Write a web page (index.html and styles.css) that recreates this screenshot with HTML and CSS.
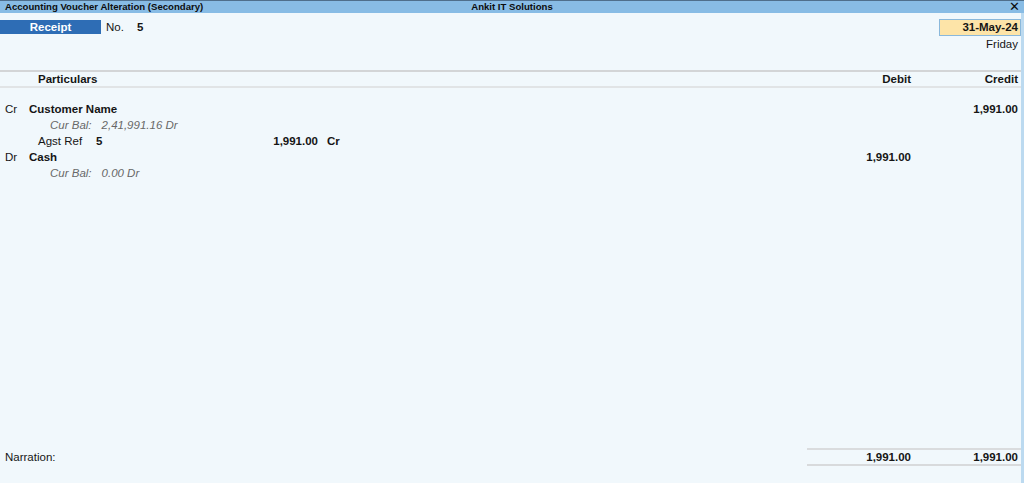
FILE: index.html
```html
<!DOCTYPE html>
<html lang="en">
<head>
    <meta charset="UTF-8">
    <title>Accounting Voucher Alteration</title>
    <link rel="stylesheet" href="styles.css">
</head>
<body>

<div class="window">

    <div class="titlebar">
        <span class="title_left">Accounting Voucher Alteration (Secondary)</span>
        <span class="title_mid">Ankit IT Solutions</span>
        <span class="close">&#x2715;</span>
    </div>

    <div class="voucher">

        <div class="vch_head">
            <div class="vch_type">
                <span class="type_box">Receipt</span>
                <span class="no_label">No.</span>
                <span class="no_val">5</span>
            </div>
            <div class="vch_date">
                <span class="date_box">31-May-24</span>
                <span class="day">Friday</span>
            </div>
        </div>

        <div class="cols">
            <span class="col_part">Particulars</span>
            <span class="col_amt">Debit</span>
            <span class="col_amt">Credit</span>
        </div>

        <div class="entries">
            <div class="row">
                <span class="led"><span class="dc">Cr</span><b>Customer Name</b></span>
                <span class="amt"></span>
                <span class="amt">1,991.00</span>
            </div>
            <div class="row">
                <span class="bal"><i>Cur Bal:</i><i class="bal_val">2,41,991.16 Dr</i></span>
            </div>
            <div class="row">
                <span class="bill">
                    <span class="bill_type">Agst Ref</span>
                    <b class="bill_ref">5</b>
                    <b class="bill_amt">1,991.00</b>
                    <b class="bill_dc">Cr</b>
                </span>
            </div>
            <div class="row">
                <span class="led"><span class="dc">Dr</span><b>Cash</b></span>
                <span class="amt">1,991.00</span>
                <span class="amt"></span>
            </div>
            <div class="row">
                <span class="bal"><i>Cur Bal:</i><i class="bal_val">0.00 Dr</i></span>
            </div>
        </div>

        <div class="foot">
            <span class="narration">Narration:</span>
            <div class="totals">
                <span class="amt">1,991.00</span>
                <span class="amt">1,991.00</span>
            </div>
        </div>

    </div>
</div>

</body>
</html>
```

FILE: styles.css
```css
*{
    margin: 0;
    padding: 0;
}
body{
    background-color: #f1f8fc;
    font-family: "Liberation Sans", Arial, sans-serif;
    font-size: 11.5px;
    color: #151515;
}
.window{
    width: 1024px;
    height: 483px;
    display: flex;
    flex-direction: column;
    overflow: hidden;
}
.titlebar{
    height: 12px;
    border-top: 1px solid #4f6f8c;
    background-color: #88bce5;
    display: grid;
    grid-template-columns: 1fr auto 1fr;
    align-items: center;
    font-size: 9.6px;
    font-weight: bold;
    line-height: 12px;
    color: #0d0d0d;
}
.title_left{
    padding-left: 5px;
}
.title_mid{
    padding-left: 0;
}
.close{
    justify-self: end;
    padding-right: 4px;
    font-size: 13px;
    font-weight: normal;
    font-family: "DejaVu Sans", sans-serif;
}
.voucher{
    flex: 1;
    width: 1021px;
    border-right: 3px solid #bcdaf0;
    display: flex;
    flex-direction: column;
}

/* voucher type, number and date */
.vch_head{
    display: flex;
    justify-content: space-between;
    padding-top: 6px;
    height: 51px;
}
.vch_type{
    display: flex;
    align-items: center;
    height: 15px;
}
.type_box{
    width: 101px;
    height: 14px;
    line-height: 14px;
    background-color: #2e6db5;
    color: #fff;
    font-weight: bold;
    text-align: center;
}
.no_label{
    margin-left: 5px;
}
.no_val{
    margin-left: 13px;
    font-weight: bold;
}
.vch_date{
    display: flex;
    flex-direction: column;
    align-items: flex-end;
}
.date_box{
    width: 78px;
    height: 15px;
    line-height: 15px;
    border: 1px solid #8ab8db;
    background-color: #fde4a8;
    font-weight: bold;
    text-align: right;
    padding-right: 2px;
}
.day{
    padding-right: 3px;
    line-height: 16px;
}

/* column heading */
.cols{
    display: grid;
    grid-template-columns: 1fr 107px 107px;
    height: 14px;
    line-height: 14px;
    border-top: 2px solid #d3d5d7;
    border-bottom: 2px solid #e1e4e6;
    font-weight: bold;
}
.col_part{
    padding-left: 38px;
}
.col_amt{
    text-align: right;
    padding-right: 3px;
}

/* ledger rows */
.entries{
    flex: 1;
    padding-top: 13px;
}
.row{
    display: grid;
    grid-template-columns: 1fr 107px 107px;
    height: 16px;
    line-height: 16px;
}
.amt{
    text-align: right;
    padding-right: 3px;
    font-weight: bold;
}
.dc{
    display: inline-block;
    width: 29px;
    padding-left: 5px;
    box-sizing: border-box;
}
.bal{
    padding-left: 50px;
    color: #686868;
}
.bal_val{
    margin-left: 10px;
}
.bill{
    display: flex;
    padding-left: 38px;
}
.bill_type{
    width: 58px;
}
.bill_ref{
    width: 60px;
}
.bill_amt{
    width: 162px;
    text-align: right;
}
.bill_dc{
    margin-left: 9px;
}

/* narration and totals */
.foot{
    display: flex;
    justify-content: space-between;
    align-items: center;
    height: 16px;
    margin-bottom: 18px;
}
.narration{
    padding-left: 5px;
}
.totals{
    display: grid;
    grid-template-columns: 107px 107px;
    width: 214px;
    height: 14px;
    line-height: 14px;
    border-top: 2px solid #dadcde;
    border-bottom: 2px solid #d8dadc;
}
```
